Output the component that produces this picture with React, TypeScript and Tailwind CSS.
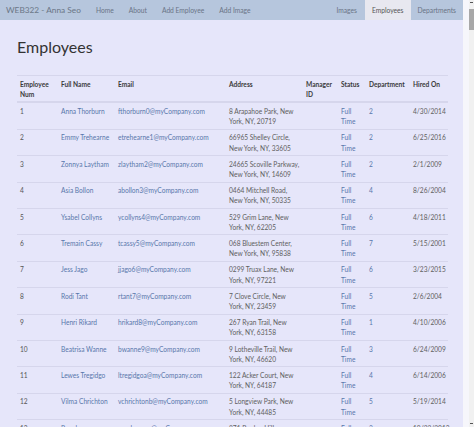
const employees = [
  { num: 1, name: "Anna Thorburn", email: "fthorburn0@myCompany.com", addr: ["8 Arapahoe Park, New", "York, NY, 20719"], dept: 2, hired: "4/30/2014" },
  { num: 2, name: "Emmy Trehearne", email: "etrehearne1@myCompany.com", addr: ["66965 Shelley Circle,", "New York, NY, 33605"], dept: 2, hired: "6/25/2016" },
  { num: 3, name: "Zonnya Laytham", email: "zlaytham2@myCompany.com", addr: ["24665 Scoville Parkway,", "New York, NY, 14609"], dept: 2, hired: "2/1/2009" },
  { num: 4, name: "Asia Bollon", email: "abollon3@myCompany.com", addr: ["0464 Mitchell Road,", "New York, NY, 50335"], dept: 4, hired: "8/26/2004" },
  { num: 5, name: "Ysabel Collyns", email: "ycollyns4@myCompany.com", addr: ["529 Grim Lane, New", "York, NY, 62205"], dept: 6, hired: "4/18/2011" },
  { num: 6, name: "Tremain Cassy", email: "tcassy5@myCompany.com", addr: ["068 Bluestem Center,", "New York, NY, 95838"], dept: 7, hired: "5/15/2001" },
  { num: 7, name: "Jess Jago", email: "jjago6@myCompany.com", addr: ["0299 Truax Lane, New", "York, NY, 97221"], dept: 6, hired: "3/23/2015" },
  { num: 8, name: "Rodi Tant", email: "rtant7@myCompany.com", addr: ["7 Clove Circle, New", "York, NY, 23459"], dept: 5, hired: "2/6/2004" },
  { num: 9, name: "Henri Rikard", email: "hrikard8@myCompany.com", addr: ["267 Ryan Trail, New", "York, NY, 63158"], dept: 1, hired: "4/10/2006" },
  { num: 10, name: "Beatrisa Wanne", email: "bwanne9@myCompany.com", addr: ["9 Lotheville Trail, New", "York, NY, 46620"], dept: 3, hired: "6/24/2009" },
  { num: 11, name: "Lewes Tregidgo", email: "ltregidgoa@myCompany.com", addr: ["122 Acker Court, New", "York, NY, 64187"], dept: 4, hired: "6/14/2006" },
  { num: 12, name: "Vilma Chrichton", email: "vchrichtonb@myCompany.com", addr: ["5 Longview Park, New", "York, NY, 44485"], dept: 5, hired: "5/19/2014" },
  { num: 13, name: "Penelopa", email: "pemlmannc@myCompany.com", addr: ["871 Bunker Hill", "Court, New York, NY"], dept: 3, hired: "10/22/2013" },
];

const leftNav = ["Home", "About", "Add Employee", "Add Image"];

const App = () => {
  return (
    <div className="flex h-[427px] w-[474px] overflow-hidden bg-[#e6e6fa] font-['Lato',sans-serif] text-[#606060]">
      <div className="w-[463px] shrink-0">
        <nav className="flex h-[20px] items-stretch bg-[#b6c6dd] text-[6.7px] text-[#6a7486]">
          <div className="flex items-center pl-[6px] pr-[7.5px] text-[8.3px] text-[#6b7686]">WEB322 - Anna Seo</div>
          {leftNav.map((item) => (
            <div key={item} className="flex items-center px-[7.5px]">
              {item}
            </div>
          ))}
          <div className="flex-1" />
          <div className="flex items-center px-[8px]">Images</div>
          <div className="flex items-center bg-[#e8e8f0] px-[7px] text-[#555]">Employees</div>
          <div className="flex items-center px-[7px]">Departments</div>
        </nav>

        <div className="px-[17px]">
          <h1 className="mt-[17px] text-[16px] leading-[20px] text-[#333]">Employees</h1>
          <table className="mt-[18px] w-[431px] table-fixed border-collapse text-left text-[6.6px] leading-[10.2px]">
            <colgroup>
              <col className="w-[41px]" />
              <col className="w-[57px]" />
              <col className="w-[111px]" />
              <col className="w-[77px]" />
              <col className="w-[35px]" />
              <col className="w-[28px]" />
              <col className="w-[44px]" />
              <col className="w-[38px]" />
            </colgroup>
            <thead>
              <tr className="border-t border-b-2 border-[#d6d6ec] text-[#3a3a3a]">
                <th className="px-[3px] py-[2.5px] align-top font-bold">Employee Num</th>
                <th className="px-[3px] py-[2.5px] align-top font-bold">Full Name</th>
                <th className="px-[3px] py-[2.5px] align-top font-bold">Email</th>
                <th className="px-[3px] py-[2.5px] align-top font-bold">Address</th>
                <th className="px-[3px] py-[2.5px] align-top font-bold">Manager ID</th>
                <th className="px-[3px] py-[2.5px] align-top font-bold">Status</th>
                <th className="px-[3px] py-[2.5px] align-top font-bold">Department</th>
                <th className="px-[3px] py-[2.5px] align-top font-bold">Hired On</th>
              </tr>
            </thead>
            <tbody>
              {employees.map((e) => (
                <tr key={e.num} className="border-t border-[#d6d6ec]">
                  <td className="px-[3px] py-[2.5px] align-top text-[#555]">{e.num}</td>
                  <td className="px-[3px] py-[2.5px] align-top whitespace-nowrap text-[#5877ab]">{e.name}</td>
                  <td className="px-[3px] py-[2.5px] align-top whitespace-nowrap text-[#5877ab]">{e.email}</td>
                  <td className="px-[3px] py-[2.5px] align-top whitespace-nowrap">
                    {e.addr[0]}
                    <br />
                    {e.addr[1]}
                  </td>
                  <td className="px-[3px] py-[2.5px] align-top"></td>
                  <td className="px-[3px] py-[2.5px] align-top text-[#5877ab]">
                    Full
                    <br />
                    Time
                  </td>
                  <td className="px-[3px] py-[2.5px] align-top text-[#5877ab]">{e.dept}</td>
                  <td className="px-[3px] py-[2.5px] align-top">{e.hired}</td>
                </tr>
              ))}
            </tbody>
          </table>
        </div>
      </div>

      <div className="w-[6px] shrink-0 bg-[#f6f6fb]" />
      <div className="relative w-[5px] shrink-0 bg-[#f1f1f1]">
        <div className="absolute left-[1px] top-[2px] h-[1px] w-[3px] bg-[#555]" />
        <div className="absolute left-0 top-[9px] h-[21px] w-[5px] bg-[#a8a8a8]" />
        <div className="absolute bottom-[3px] left-[1px] h-[1px] w-[3px] bg-[#555]" />
      </div>
    </div>
  );
};

export default App;
